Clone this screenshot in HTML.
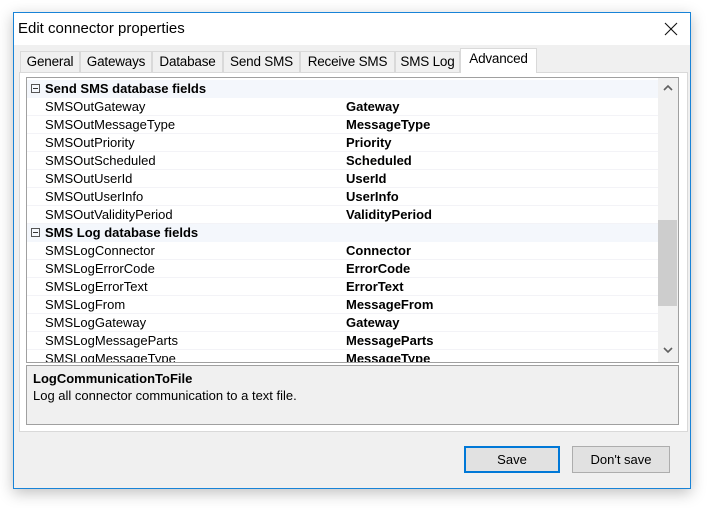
<!DOCTYPE html>
<html><head><style>
*{margin:0;padding:0;box-sizing:border-box}
body{width:709px;height:508px;background:#fff;font-family:"Liberation Sans",sans-serif;font-size:13px;color:#000;position:relative;overflow:hidden}
.win{position:absolute;left:13px;top:12px;width:678px;height:477px;border:1px solid #1883d7;background:#f0f0f0;box-shadow:0 4px 14px rgba(0,0,0,.25)}
.title{position:absolute;left:0;top:0;width:676px;height:32px;background:#fff;font-size:15px;line-height:32px;padding-left:4px}
.x{position:absolute;right:12px;top:9px;width:14px;height:14px}
.tab{position:absolute;top:38px;height:21px;border:1px solid #d9d9d9;border-bottom:none;background:#f0f0f0;line-height:19px;text-align:center;font-size:13.5px;letter-spacing:-0.2px;color:#000}
.tab.a{top:35px;height:25px;background:#fff;border-color:#d9d9d9;z-index:2}
.panel{position:absolute;left:5px;top:59px;width:669px;height:360px;border:1px solid #d9d9d9;background:#fff}
.grid{position:absolute;left:12px;top:64px;width:653px;height:286px;border:1px solid #a0a0a0;background:#fff;overflow:hidden}
.row{position:absolute;left:0;width:631px;height:18px;line-height:17px;border-bottom:1px solid #f3f3f7}
.row .n{position:absolute;left:18px}
.row .v{position:absolute;left:319px;font-weight:bold}
.cat{background:#f4f7fc;font-weight:bold;border-bottom:none}
.cat .n{left:18px}
.box{position:absolute;left:4px;top:4px;width:9px;height:9px;border:1px solid #555;}
.box:after{content:"";position:absolute;left:1px;top:3px;width:5px;height:1px;background:#333}
.sb{position:absolute;left:631px;top:0;width:20px;height:284px;background:#f0f0f0}
.thumb{position:absolute;left:631px;top:142px;width:19px;height:86px;background:#cdcdcd}
.desc{position:absolute;left:12px;top:352px;width:653px;height:60px;border:1px solid #a0a0a0;background:#f0f0f0;padding:4px 6px;line-height:17px}
.btn{position:absolute;top:433px;height:27px;border:1px solid #adadad;background:#e1e1e1;text-align:center;line-height:25px;font-size:13px}
</style></head><body>
<div class="win">
<div class="title">Edit connector properties<svg class="x" viewBox="0 0 14 14"><path d="M1 1L13 13M13 1L1 13" stroke="#111" stroke-width="1.1"/></svg></div>
<div class="tab" style="left:6px;width:60px">General</div>
<div class="tab" style="left:66px;width:72px">Gateways</div>
<div class="tab" style="left:138px;width:71px">Database</div>
<div class="tab" style="left:209px;width:77px">Send SMS</div>
<div class="tab" style="left:286px;width:95px">Receive SMS</div>
<div class="tab" style="left:381px;width:65px">SMS Log</div>
<div class="tab a" style="left:446px;width:77px">Advanced</div>
<div class="panel"></div>
<div class="grid">
<div class="row cat" style="top:2px"><span class="box"></span><span class="n">Send SMS database fields</span></div>
<div class="row" style="top:20px"><span class="n">SMSOutGateway</span><span class="v">Gateway</span></div>
<div class="row" style="top:38px"><span class="n">SMSOutMessageType</span><span class="v">MessageType</span></div>
<div class="row" style="top:56px"><span class="n">SMSOutPriority</span><span class="v">Priority</span></div>
<div class="row" style="top:74px"><span class="n">SMSOutScheduled</span><span class="v">Scheduled</span></div>
<div class="row" style="top:92px"><span class="n">SMSOutUserId</span><span class="v">UserId</span></div>
<div class="row" style="top:110px"><span class="n">SMSOutUserInfo</span><span class="v">UserInfo</span></div>
<div class="row" style="top:128px"><span class="n">SMSOutValidityPeriod</span><span class="v">ValidityPeriod</span></div>
<div class="row cat" style="top:146px"><span class="box"></span><span class="n">SMS Log database fields</span></div>
<div class="row" style="top:164px"><span class="n">SMSLogConnector</span><span class="v">Connector</span></div>
<div class="row" style="top:182px"><span class="n">SMSLogErrorCode</span><span class="v">ErrorCode</span></div>
<div class="row" style="top:200px"><span class="n">SMSLogErrorText</span><span class="v">ErrorText</span></div>
<div class="row" style="top:218px"><span class="n">SMSLogFrom</span><span class="v">MessageFrom</span></div>
<div class="row" style="top:236px"><span class="n">SMSLogGateway</span><span class="v">Gateway</span></div>
<div class="row" style="top:254px"><span class="n">SMSLogMessageParts</span><span class="v">MessageParts</span></div>
<div class="row" style="top:272px"><span class="n">SMSLogMessageType</span><span class="v">MessageType</span></div>
<div class="sb"><svg width="20" height="284"><path d="M6 12 L10 8 L14 12" stroke="#606060" stroke-width="1.6" fill="none"/><path d="M6 270 L10 274 L14 270" stroke="#606060" stroke-width="1.6" fill="none"/></svg></div>
<div class="thumb"></div>
</div>
<div class="desc"><b>LogCommunicationToFile</b><br>Log all connector communication to a text file.</div>
<div class="btn" style="left:450px;width:96px;border:2px solid #0078d7;line-height:23px">Save</div>
<div class="btn" style="left:558px;width:98px">Don't save</div>
</div>
</body></html>
